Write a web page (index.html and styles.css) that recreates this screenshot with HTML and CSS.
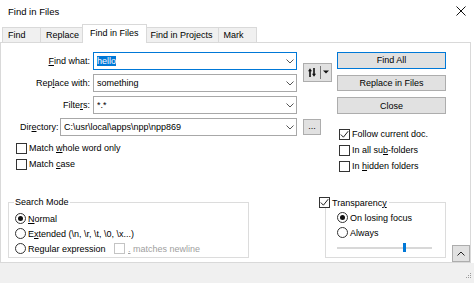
FILE: index.html
```html
<!DOCTYPE html>
<html>
<head>
<meta charset="utf-8">
<link rel="stylesheet" href="styles.css">
</head>
<body>
<div class="win">
  <div class="titlebar">
    <span class="title">Find in Files</span>
    <svg class="close" width="10" height="10" viewBox="0 0 10 10"><path d="M0.5 0.5L9.5 9.5M9.5 0.5L0.5 9.5" stroke="#111" stroke-width="1" fill="none"/></svg>
  </div>
  <div class="tabs">
    <div class="tab">Find</div>
    <div class="tab">Replace</div>
    <div class="tab sel">Find in Files</div>
    <div class="tab">Find in Projects</div>
    <div class="tab">Mark</div>
  </div>
  <div class="panel">
    <div class="top">
      <div class="lbl r1"><u>F</u>ind what:</div>
      <div class="combo focus r1"><span class="val"><span class="seltext">hello</span></span><svg class="chev" width="8" height="5" viewBox="0 0 8 5"><path d="M0.5 0.5L4 4L7.5 0.5" fill="none" stroke="#555"/></svg></div>

      <div class="lbl r2">Rep<u>l</u>ace with:</div>
      <div class="combo r2"><span class="val">something</span><svg class="chev" width="8" height="5" viewBox="0 0 8 5"><path d="M0.5 0.5L4 4L7.5 0.5" fill="none" stroke="#555"/></svg></div>

      <div class="lbl r3">Filte<u>r</u>s:</div>
      <div class="combo r3"><span class="val">*.*</span><svg class="chev" width="8" height="5" viewBox="0 0 8 5"><path d="M0.5 0.5L4 4L7.5 0.5" fill="none" stroke="#555"/></svg></div>

      <div class="dirrow">
        <div class="lbl2">Dir<u>e</u>ctory:</div>
        <div class="combo"><span class="val">C:\usr\local\apps\npp\npp869</span><svg class="chev" width="8" height="5" viewBox="0 0 8 5"><path d="M0.5 0.5L4 4L7.5 0.5" fill="none" stroke="#555"/></svg></div>
      </div>

      <div class="swap">
        <svg class="swapicon" width="8" height="9" viewBox="0 0 8 9"><path d="M2 9V2.5M6 0V6.5" stroke="#111" stroke-width="1.6" fill="none"/><path d="M0 3.2L2 0.2L4 3.2Z M4 5.8L6 8.8L8 5.8Z" fill="#111"/></svg>
        <span class="sep"></span>
        <svg class="tri" width="6" height="4" viewBox="0 0 6 4"><path d="M0 0.5H6L3 3.5Z" fill="#111"/></svg>
      </div>
      <div class="dots">...</div>

      <div class="btns">
        <div class="btn def">Find All</div>
        <div class="btn">Replace in Files</div>
        <div class="btn">Close</div>
      </div>

      <div class="rchecks">
        <div class="opt"><span class="cb"><svg width="9" height="9" viewBox="0 0 9 9"><path d="M0.8 4.5L3.4 7.2L8.2 1.2" fill="none" stroke="#222" stroke-width="1"/></svg></span><span>Follow current doc.</span></div>
        <div class="opt"><span class="cb"></span><span>In all su<u>b</u>-folders</span></div>
        <div class="opt"><span class="cb"></span><span>In <u>h</u>idden folders</span></div>
      </div>

      <div class="lchecks">
        <div class="opt"><span class="cb"></span><span>Match <u>w</u>hole word only</span></div>
        <div class="opt"><span class="cb"></span><span>Match <u>c</u>ase</span></div>
      </div>
    </div>

    <div class="bottom">
      <div class="group search">
        <div class="gtitle">Search Mode</div>
        <div class="opt"><span class="rb on"><span class="dot"></span></span><span><u>N</u>ormal</span></div>
        <div class="opt"><span class="rb"></span><span>E<u>x</u>tended (\n, \r, \t, \0, \x...)</span></div>
        <div class="opt">
          <span class="optmain"><span class="rb"></span><span>Re<u>g</u>ular expression</span></span>
          <span class="cb dis"></span><span class="distext"><u>.</u> matches newline</span>
        </div>
      </div>
      <div class="group transp">
        <div class="tlegend opt"><span class="cb"><svg width="9" height="9" viewBox="0 0 9 9"><path d="M0.8 4.5L3.4 7.2L8.2 1.2" fill="none" stroke="#222" stroke-width="1"/></svg></span><span>Transparenc<u>y</u></span></div>
        <div class="opt"><span class="rb on"><span class="dot"></span></span><span>On losing focus</span></div>
        <div class="opt"><span class="rb"></span><span>Always</span></div>
        <div class="slider"><span class="track"></span><span class="thumb"></span></div>
      </div>
      <div class="collapse"><svg width="8" height="5" viewBox="0 0 8 5"><path d="M0.5 4.5L4 1L7.5 4.5" fill="none" stroke="#222"/></svg></div>
    </div>
  </div>
  <div class="status">
    <svg class="grip" width="8" height="8" viewBox="0 0 8 8"><g fill="#9a9a9a"><rect x="6" y="0" width="1" height="1"/><rect x="4" y="2" width="1" height="1"/><rect x="6" y="2" width="1" height="1"/><rect x="2" y="4" width="1" height="1"/><rect x="4" y="4" width="1" height="1"/><rect x="6" y="4" width="1" height="1"/></g></svg>
  </div>
</div>
</body>
</html>
```

FILE: styles.css
```css
* { box-sizing: border-box; }
body {
  margin: 0;
  width: 474px;
  height: 283px;
  overflow: hidden;
  font-family: "Liberation Sans", Arial, sans-serif;
  font-size: 9px;
  color: #000;
  background: #fff;
}
u { text-decoration-thickness: 1px; text-underline-offset: 1px; }

.win {
  width: 474px;
  height: 283px;
  display: flex;
  flex-direction: column;
  background: #fff;
}

.titlebar {
  height: 22px;
  flex: none;
  display: flex;
  align-items: center;
  justify-content: space-between;
  padding: 0 8px 0 8px;
}
.title { font-size: 9.5px; }

.tabs {
  height: 20px;
  flex: none;
  display: flex;
  align-items: flex-end;
  padding-left: 2px;
}
.tab {
  height: 15px;
  line-height: 14px;
  padding: 0 5px;
  min-width: 39px;
  background: #f0f0f0;
  border: 1px solid #d9d9d9;
  border-bottom: none;
  margin-right: -1px;
  white-space: nowrap;
}
.tab.sel {
  height: 19px;
  line-height: 16px;
  margin: 0 -2px -1px -2px;
  padding: 0 7px;
  background: #fff;
  position: relative;
  z-index: 1;
}

.panel {
  flex: none;
  width: 471px;
  height: 221px;
  border: 1px solid #d9d9d9;
  display: flex;
  flex-direction: column;
}

.top {
  display: grid;
  grid-template-columns: 92px 204px 6px 29px 5px 109px;
  grid-template-rows: repeat(4, 18px) auto;
  row-gap: 4px;
  padding-top: 9px;
}
.r1 { grid-row: 1; }
.r2 { grid-row: 2; }
.r3 { grid-row: 3; }

.lbl {
  grid-column: 1;
  text-align: right;
  padding-right: 3px;
  line-height: 18px;
  white-space: nowrap;
}
.combo {
  grid-column: 2;
  display: flex;
  align-items: center;
  height: 18px;
  border: 1px solid #a8a8a8;
  background: #fff;
  padding-left: 3px;
}
.combo.focus { border-color: #0078d7; }
.val { flex: 1; white-space: nowrap; overflow: hidden; }
.seltext { background: #0078d7; color: #fff; padding: 1px 0; }
.chev { flex: none; margin-right: 2px; }

.dirrow {
  grid-column: 1 / 3;
  grid-row: 4;
  display: grid;
  grid-template-columns: 59px 1fr;
}
.lbl2 { padding-left: 19px; line-height: 18px; white-space: nowrap; }

.swap {
  grid-column: 4;
  grid-row: 1 / 3;
  align-self: center;
  height: 19px;
  background: #e1e1e1;
  border: 1px solid #adadad;
  display: flex;
  align-items: center;
  padding-left: 4px;
}
.sep { width: 1px; height: 13px; background: #777; margin: 0 2px 0 4px; }

.dots {
  grid-column: 4;
  grid-row: 4;
  align-self: center;
  width: 18px;
  height: 16px;
  background: #e1e1e1;
  border: 1px solid #adadad;
  text-align: center;
  line-height: 12px;
}

.btns {
  grid-column: 6;
  grid-row: 1 / 4;
  display: flex;
  flex-direction: column;
  gap: 6px;
}
.btn {
  height: 17px;
  background: #e1e1e1;
  border: 1px solid #adadad;
  display: flex;
  align-items: center;
  justify-content: center;
}
.btn.def { border-color: #0078d7; }

.rchecks {
  grid-column: 6;
  grid-row: 4 / 6;
  padding-top: 8px;
  padding-left: 2px;
}
.lchecks {
  grid-column: 1 / 4;
  grid-row: 5;
  padding-left: 15px;
}

.opt {
  display: flex;
  align-items: center;
  gap: 2px;
  height: 16px;
  white-space: nowrap;
}
.group .opt { height: 15px; }

.cb {
  flex: none;
  width: 11px;
  height: 11px;
  border: 1px solid #333;
  background: #fff;
  display: flex;
  align-items: center;
  justify-content: center;
}
.cb.dis { border-color: #c4c4c4; }
.distext { color: #a0a0a0; margin-left: 1px; }

.rb {
  flex: none;
  width: 11px;
  height: 11px;
  border: 1px solid #333;
  border-radius: 50%;
  background: #fff;
  display: flex;
  align-items: center;
  justify-content: center;
}
.dot { width: 5px; height: 5px; border-radius: 50%; background: #111; }

.bottom {
  margin-top: auto;
  display: flex;
  align-items: flex-end;
  padding-left: 7px;
}
.group {
  border: 1px solid #dcdcdc;
  margin-bottom: 4px;
}
.search {
  width: 241px;
  padding: 0 0 1px 6px;
}
.gtitle {
  line-height: 11px;
  margin: -6px 0 3px -1px;
  padding: 0 1px;
  background: #fff;
  width: fit-content;
}
.optmain {
  display: flex;
  align-items: center;
  gap: 2px;
  width: 97px;
  flex: none;
}

.transp {
  width: 121px;
  margin-left: 76px;
  padding: 0 0 2px 11px;
}
.group .tlegend {
  height: 11px;
  margin: -6px 0 2px -18px;
  background: #fff;
  width: fit-content;
  padding-right: 2px;
}
.slider {
  height: 15px;
  width: 95px;
  display: flex;
  align-items: center;
  position: relative;
}
.track {
  width: 95px;
  height: 2px;
  background: #d8d8d8;
}
.thumb {
  position: absolute;
  left: 66px;
  top: 3px;
  width: 3px;
  height: 9px;
  background: #0078d7;
}

.collapse {
  width: 18px;
  height: 17px;
  margin-left: 6px;
  background: #e1e1e1;
  border: 1px solid #adadad;
  display: flex;
  align-items: center;
  justify-content: center;
}

.status {
  flex: 1;
  background: #f0f0f0;
  display: flex;
  justify-content: flex-end;
  align-items: flex-end;
  padding: 0 2px 2px 0;
}
```
